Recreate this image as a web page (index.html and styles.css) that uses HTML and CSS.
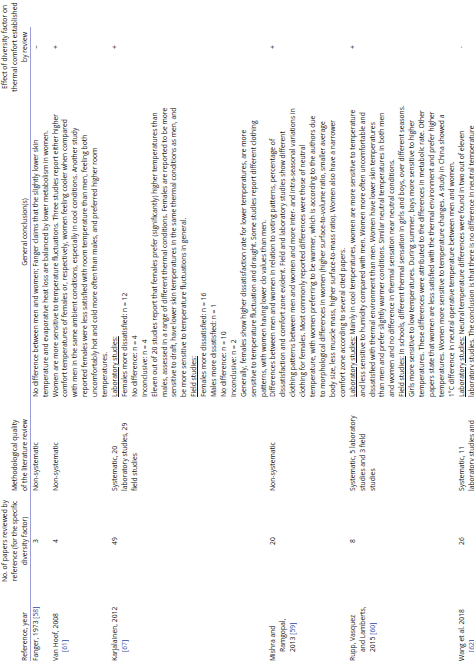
FILE: index.html
```html
<!DOCTYPE html>
<html lang="en">
<head>
<meta charset="utf-8">
<title>Gender as a diversity factor in thermal comfort reviews</title>
<link rel="stylesheet" href="styles.css">
</head>
<body>
<div class="viewport">
  <div class="sheet">
    <div class="th">Reference, year</div>
    <div class="th center">No. of papers reviewed by<br>reference (for the specific<br>diversity factor)</div>
    <div class="th">Methodological quality<br>of the literature review</div>
    <div class="th center">General conclusion(s)</div>
    <div class="th center"><span class="over">Effect of diversity factor on<br>thermal comfort established<br>by review</span></div>

    <div class="ref">Fanger, 1973 <span class="cite">[58]</span></div>
    <div class="num">3</div>
    <div class="meth">Non-systematic</div>
    <div class="conc">No difference between men and women; Fanger claims that the slightly lower skin<br>temperature and evaporative heat loss are balanced by lower metabolism in women.</div>
    <div class="eff">–</div>

    <div class="ref">Van Hoof, 2008<br><span class="cite">[61]</span></div>
    <div class="num">4</div>
    <div class="meth">Non-systematic</div>
    <div class="conc">Women are more sensitive to temperature fluctuations. Three studies report either higher<br>comfort temperatures of females or, respectively, women feeling cooler when compared<br>with men in the same ambient conditions, especially in cool conditions. Another study<br>reported females were less satisfied with room temperature than men, feeling both<br>uncomfortably hot and cold more often than males, and preferred higher room<br>temperatures.</div>
    <div class="eff">+</div>

    <div class="ref">Karjalainen, 2012<br><span class="cite">[67]</span></div>
    <div class="num">49</div>
    <div class="meth">Systematic, 20<br>laboratory studies, 29<br>field studies</div>
    <div class="conc"><span class="u">Laboratory studies:</span><br>Females more dissatisfied: n = 12<br>No difference: n = 4<br>Inconclusive: n = 4<br>Eleven out of 20 studies report that females prefer (significantly) higher temperatures than<br>males, assessed in a range of different thermal conditions. Females are reported to be more<br>sensitive to draft, have lower skin temperatures in the same thermal conditions as men, and<br>be more sensitive to temperature fluctuations in general.<br><span class="u">Field studies:</span><br>Females more dissatisfied: n = 16<br>Males more dissatisfied: n = 1<br>No difference: n = 10<br>Inconclusive: n = 2<br>Generally, females show higher dissatisfaction rate for lower temperatures, are more<br>sensitive to temperature fluctuation and draught. Some studies report different clothing<br>patterns, with women having lower clo values than men.</div>
    <div class="eff">+</div>

    <div class="ref">Mishra and<br>Ramgopal,<br>2013 <span class="cite">[59]</span></div>
    <div class="num">20</div>
    <div class="meth">Non-systematic</div>
    <div class="conc">Differences between men and women in relation to voting patterns, percentage of<br>dissatisfaction and comfort zone evident. Field and laboratory studies show different<br>clothing patterns between men and women and more inter- and intra-seasonal variations in<br>clothing for females. Most commonly reported differences were those of neutral<br>temperature, with women preferring to be warmer, which is according to the authors due<br>to morphological differences in women (higher surface-to-volume ratio, smaller average<br>body size, less muscle mass, higher surface-to-mass ratio). Women also have a narrower<br>comfort zone according to several cited papers.</div>
    <div class="eff">+</div>

    <div class="ref">Rupp, Vasquez<br>and Lamberts,<br>2015 <span class="cite">[60]</span></div>
    <div class="num">8</div>
    <div class="meth">Systematic, 5 laboratory<br>studies and 3 field<br>studies</div>
    <div class="conc"><span class="u">Laboratory studies:</span> Mainly in cool temperatures, women are more sensitive to temperature<br>and less sensitive to humidity compared with men. Women more often uncomfortable and<br>dissatisfied with thermal environment than men. Women have lower skin temperatures<br>than men and prefer slightly warmer conditions. Similar neutral temperatures in both men<br>and women and no difference in thermal sensation near neutral conditions.<br><span class="u">Field studies:</span> In schools, different thermal sensation in girls and boys, over different seasons.<br>Girls more sensitive to low temperatures. During summer, boys more sensitive to higher<br>temperatures. These differences were attributed to the differences in metabolic rate. Other<br>papers state that women are less satisfied with the thermal environment and prefer higher<br>temperatures. Women more sensitive to temperature changes. A study in China showed a<br>1°C difference in neutral operative temperature between men and women.</div>
    <div class="eff">+</div>

    <div class="ref">Wang et al. 2018<br><span class="cite">[62]</span></div>
    <div class="num">26</div>
    <div class="meth">Systematic, 11<br>laboratory studies and</div>
    <div class="conc"><span class="u">Laboratory studies:</span> Neutral temperature differences were found in two out of eleven<br>laboratory studies. The conclusion is that there is no difference in neutral temperature</div>
    <div class="eff">·</div>
  </div>
</div>
</body>
</html>
```

FILE: styles.css
```css
html, body {
  margin: 0;
  padding: 0;
  overflow: hidden;
  background: #ffffff;
}

.viewport {
  width: 474px;
  height: 661px;
  overflow: hidden;
}

.sheet {
  width: 661px;
  transform-origin: 0 0;
  transform: translateY(661px) rotate(-90deg);
  display: grid;
  grid-template-columns: 70px 100px 94px 330px 40px;
  font-family: "Open Sans", "Noto Sans", sans-serif;
  font-size: 6.75px;
  line-height: 9.9px;
  color: #141414;
}

.th {
  display: flex;
  align-items: flex-end;
  border-bottom: 1.5px solid #9c9dd4;
  white-space: nowrap;
}

.th.center {
  justify-content: center;
  text-align: center;
}

.over {
  flex-shrink: 0;
}

.ref {
  padding-left: 9px;
  text-indent: -9px;
  white-space: nowrap;
}

.cite {
  color: #2f4aa6;
}

.num {
  text-align: center;
}

.meth {
  white-space: nowrap;
}

.conc {
  white-space: nowrap;
}

.u {
  text-decoration: underline;
  text-underline-offset: 1px;
}

.eff {
  display: flex;
  justify-content: center;
}
```
